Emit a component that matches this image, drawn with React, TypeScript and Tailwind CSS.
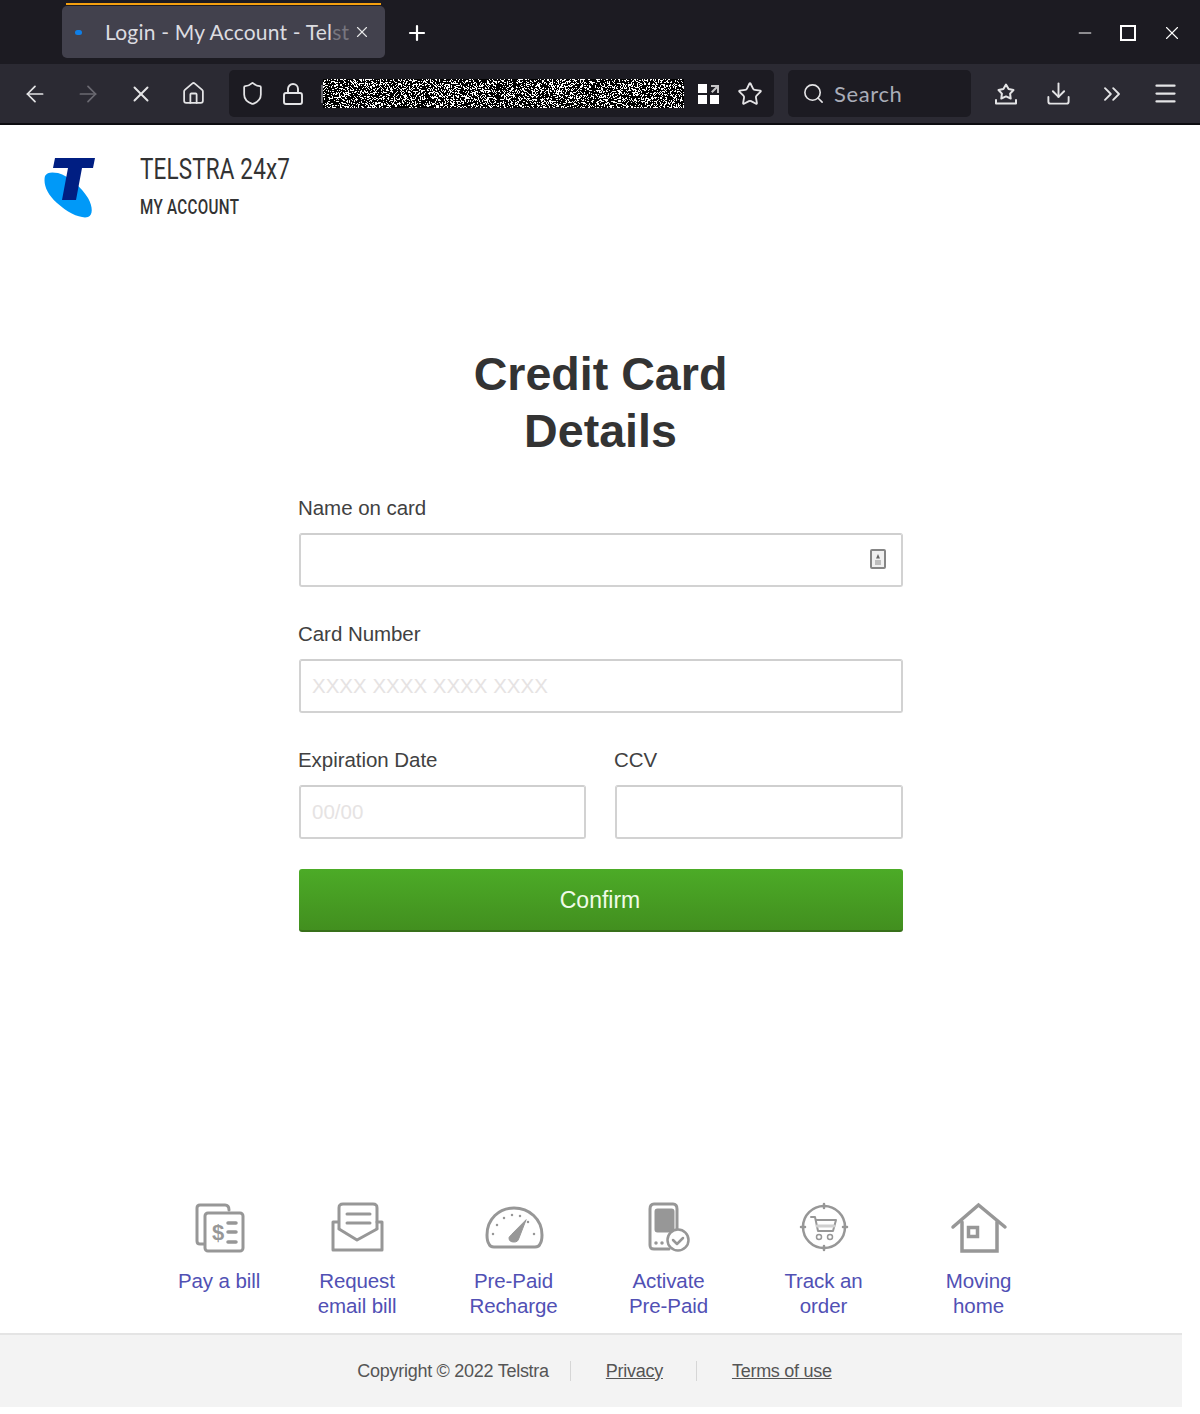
import { ArrowLeft, ArrowRight, ChevronsRight, Download, Home, Lock, Menu, Minus, Plus, Search, Shield, Star, X } from "lucide-react";
import { ReactNode, useMemo } from "react";

const sans = "font-['Liberation_Sans',Arial,sans-serif]";

// redacted url strip, static noise
function NoiseStrip() {
  const d = useMemo(() => {
    let seed = 48271;
    let out = "";
    for (let y = 0; y < 29; y++) {
      for (let x = 0; x < 361; x++) {
        seed = (seed * 16807) % 2147483647;
        if (seed % 100 < 33) out += `M${x} ${y}h1v1h-1z`;
      }
    }
    return out;
  }, []);
  return (
    <svg width="361" height="29" viewBox="0 0 361 29" className="shrink-0 bg-black">
      <path d={d} fill="#fff" />
    </svg>
  );
}

function ToolBtn({ children, className }: { children: ReactNode; className?: string }) {
  return <div className={`flex items-center justify-center shrink-0 ${className ?? ""}`}>{children}</div>;
}

function BrowserChrome() {
  return (
    <div className="shrink-0 font-['Open_Sans',sans-serif]">
      <div className="h-[64px] bg-[#1c1b22] flex items-start pl-[62px] pr-[17px]">
        <div className="relative mt-[6px] w-[323px] h-[52px] bg-[#42414d] rounded-[5px] flex items-center pl-[13px] pr-[14px]">
          <div className="absolute -top-[3px] left-[4px] right-[4px] h-[2px] bg-[#f5a00f]" />
          <span className="w-[7px] h-[5px] rounded-full bg-[#0f7fe8] shrink-0" />
          <span className="ml-[23px] w-[250px] overflow-hidden whitespace-nowrap text-[21px] tracking-[0.2px] text-[#dcdce0] font-['Lato',sans-serif]">
            Login - My Account - Tel<span className="text-[#77767f]">st</span>
          </span>
          <X size={18} strokeWidth={1.5} className="text-[#e8e8ea] -ml-[1px] shrink-0" />
        </div>
        <Plus size={24} strokeWidth={2.2} className="text-white ml-[20px] mt-[21px]" />
        <div className="ml-auto flex items-center gap-[23px] mt-[22px] text-white">
          <Minus size={20} strokeWidth={1.2} />
          <svg width="20" height="20" viewBox="0 0 20 20" fill="none" stroke="currentColor" strokeWidth="2">
            <rect x="3" y="3" width="14" height="14" />
          </svg>
          <X size={22} strokeWidth={1.2} />
        </div>
      </div>
      <div className="h-[59px] bg-[#2b2a33] flex items-center pl-[22px] text-[#e4e4e6]">
        <ToolBtn className="w-[26px]"><ArrowLeft size={26} strokeWidth={1.6} /></ToolBtn>
        <ToolBtn className="w-[26px] ml-[27px] text-[#6b6a72]"><ArrowRight size={26} strokeWidth={1.6} /></ToolBtn>
        <ToolBtn className="w-[26px] ml-[27px]"><X size={26} strokeWidth={1.8} /></ToolBtn>
        <ToolBtn className="w-[26px] ml-[26px]"><Home size={25} strokeWidth={1.7} /></ToolBtn>
        <div className="ml-[23px] w-[545px] h-[47px] rounded-[5px] bg-[#1c1b22] flex items-center pl-[11px]">
          <Shield size={25} strokeWidth={1.7} className="shrink-0" />
          <Lock size={24} strokeWidth={1.9} className="shrink-0 ml-[16px]" />
          <span className="w-[2px] h-[18px] bg-[#6b6a72] ml-[16px] shrink-0" />
          <NoiseStrip />
          <svg width="22" height="22" viewBox="0 0 22 22" className="ml-[14px] shrink-0" fill="#fff">
            <rect x="0" y="1" width="9" height="9" />
            <rect x="0" y="12" width="9" height="9" />
            <rect x="12" y="12" width="9" height="9" />
            <path d="M13 2h8v8h-2V5.500l-4.500 4.500-1.500-1.500L17.500 4H13z" opacity="0.75" />
          </svg>
          <Star size={26} strokeWidth={1.7} className="ml-[17px] shrink-0" />
        </div>
        <div className="ml-[14px] w-[183px] h-[47px] rounded-[5px] bg-[#1c1b22] flex items-center pl-[14px]">
          <Search size={23} strokeWidth={1.7} />
          <span className="ml-[9px] text-[22px] tracking-[0.6px] text-[#a9adb8] font-['Lato',sans-serif]">Search</span>
        </div>
        <div className="ml-[22px] flex items-center gap-[26px]">
          <svg width="26" height="26" viewBox="0 0 26 26" fill="none" stroke="currentColor" strokeWidth="2">
            <path d="M13 3.500l2.600 4.600 4.900.9-3.400 3.600.6 4.900-4.700-2.100-4.700 2.100.6-4.900L5.500 9l4.900-.9z" strokeLinejoin="round" />
            <path d="M3 19v3.500h20V19" strokeLinecap="round" strokeLinejoin="round" />
          </svg>
          <Download size={27} strokeWidth={1.7} />
          <ChevronsRight size={28} strokeWidth={1.6} />
          <Menu size={27} strokeWidth={2} />
        </div>
      </div>
      <div className="h-[2px] bg-[#0c0c10]" />
    </div>
  );
}

function TelstraLogo() {
  return (
    <svg width="52" height="62" viewBox="0 0 52 62" className="shrink-0">
      <path d="M1 19C-1 27 3 37 13 46 24 56 37 62 44 60 49 58 49 50 44 41 38 31 25 19 14 16 8 15 3 15 1 19Z" fill="#0099f8" />
      <path d="M11 1H51L49 11H38L32 43H18L24 11H9Z" fill="#001e82" />
    </svg>
  );
}

function Field({ label, placeholder, icon, className }: { label: string; placeholder?: string; icon?: ReactNode; className?: string }) {
  return (
    <label className={`block ${className ?? ""}`}>
      <span className="block h-[36px] -mt-[1px] mb-[1px] -ml-[1px] text-[20.5px] leading-[24px] tracking-[-0.05px] text-[#414141]">{label}</span>
      <span className="relative block">
        <input
          placeholder={placeholder}
          className="block w-full h-[54px] border-2 border-[#d2d2d2] border-t-[#cfcfcf] rounded-[3px] bg-white px-[11px] text-[20.5px] outline-none placeholder:text-[#e6e3e3]"
        />
        {icon}
      </span>
    </label>
  );
}

const iconProps = { width: 60, height: 56, viewBox: "0 0 60 56", fill: "none", stroke: "#979797", strokeWidth: 3, strokeLinejoin: "round" as const, strokeLinecap: "round" as const };

function BillIcon() {
  return (
    <svg {...iconProps}>
      <path d="M15 43h-4c-2 0-3-1-3-3V7c0-2 1-3 3-3h25c3 0 4 2 4 5" />
      <rect x="16" y="12" width="38" height="38" rx="3" />
      <text x="23" y="39" fontSize="22" fontWeight="700" fill="#979797" stroke="none" fontFamily="Liberation Sans, sans-serif">$</text>
      <path d="M39 22h8M39 31h8M39 41h8" strokeWidth="3.500" />
    </svg>
  );
}

function EmailIcon() {
  return (
    <svg {...iconProps}>
      <path d="M12 27V7c0-3 1-4 4-4h30c3 0 4 1 4 4v20" />
      <path d="M11 21H6v28h49V21h-5" />
      <path d="M12 28l18 11 20-11" />
      <path d="M20 13h23M20 22h23" />
    </svg>
  );
}

function GaugeIcon() {
  return (
    <svg {...iconProps}>
      <path d="M5 43c-2-3-2-6-2-9C3 18 15 7 30 7s28 11 28 27c0 3 0 6-2 9-1 3-3 3-5 3H10c-2 0-4 0-5-3Z" />
      <path d="M42 19 35 37c-1 3-2 4-5 4-3 0-5-1-5-4 0-1 1-2 2-3Z" fill="#979797" strokeWidth="1" />
      <path d="M9 33v.1M13 24v.1M20 17v.1M28 14v.1M36 15v.1M44 21v.1M50 33v.1" strokeWidth="2.500" />
    </svg>
  );
}

function ActivateIcon() {
  return (
    <svg {...iconProps}>
      <path d="M30 48H15c-3 0-4-1-4-4V8c0-3 1-5 4-5h19c3 0 4 2 4 5v20" />
      <rect x="17" y="9" width="17" height="21" rx="1.500" fill="#979797" />
      <path d="M17 42v.1M23 42v.1" strokeWidth="3.500" />
      <circle cx="39" cy="39" r="10.500" fill="#fff" strokeWidth="2.500" />
      <path d="M34 39l4 4 6-6" strokeWidth="2.500" />
    </svg>
  );
}

function TrackIcon() {
  return (
    <svg {...iconProps}>
      <circle cx="30" cy="26" r="21" strokeWidth="2.500" />
      <path d="M30 3v4M30 45v4M7 26h4M49 26h4" strokeWidth="2.500" />
      <path d="M17 16h4l3 14h15l3-11H22" strokeWidth="2" />
      <path d="M23 25h17" stroke="#d0d0d0" strokeWidth="3" />
      <circle cx="25" cy="36" r="2.500" strokeWidth="1.500" />
      <circle cx="36" cy="36" r="2.500" strokeWidth="1.500" />
    </svg>
  );
}

function HouseIcon() {
  return (
    <svg {...iconProps}>
      <path d="M4 26 29.500 4 56 26" strokeWidth="3.500" strokeLinejoin="miter" />
      <path d="M13 21v29h35V21" strokeWidth="3.500" strokeLinejoin="miter" />
      <rect x="19.500" y="26.500" width="9" height="9" strokeWidth="3.500" strokeLinejoin="miter" />
    </svg>
  );
}

const shortcuts = [
  { lines: ["Pay a bill"], icon: <BillIcon />, w: "w-[138px]" },
  { lines: ["Request", "email bill"], icon: <EmailIcon />, w: "w-[138px]" },
  { lines: ["Pre-Paid", "Recharge"], icon: <GaugeIcon />, w: "w-[155px] ml-[10px]" },
  { lines: ["Activate", "Pre-Paid"], icon: <ActivateIcon />, w: "w-[155px]" },
  { lines: ["Track an", "order"], icon: <TrackIcon />, w: "w-[155px]" },
  { lines: ["Moving", "home"], icon: <HouseIcon />, w: "w-[155px]" },
];

export default function App() {
  return (
    <div className={`w-[1200px] h-[1414px] bg-white flex flex-col overflow-hidden ${sans}`}>
      <BrowserChrome />

      <header className="flex items-start pl-[44px] pt-[32px] shrink-0">
        <TelstraLogo />
        <div className="ml-[44px] text-[#333]">
          <div className="origin-left scale-x-[0.775] whitespace-nowrap font-['Roboto',sans-serif] text-[29px] leading-[24px] tracking-[0.2px]">TELSTRA 24x7</div>
          <div className="origin-left scale-x-[0.76] whitespace-nowrap font-['Roboto',sans-serif] font-medium text-[20px] leading-[20px] mt-[16px] tracking-[0.4px]">MY ACCOUNT</div>
        </div>
      </header>

      <main className="w-[604px] ml-[299px] mt-[127px] shrink-0">
        <h1 className="-ml-[1px] text-center text-[46.6px] leading-[57px] font-bold text-[#333]">
          Credit Card
          <br />
          Details
        </h1>
        <div className="mt-[37px] flex flex-col gap-[36px]">
          <Field
            label="Name on card"
            icon={
              <svg width="16" height="20" viewBox="0 0 16 20" className="absolute right-[17px] top-[16px]">
                <rect x="1" y="1" width="14" height="18" rx="1" fill="#f0f0f0" stroke="#858585" strokeWidth="2" />
                <path d="M8 5l2 4.500H6z" fill="#666" />
                <path d="M5 11h6v5H5z" fill="#bdbdbd" />
              </svg>
            }
          />
          <Field label="Card Number" placeholder="XXXX XXXX XXXX XXXX" />
          <div className="flex gap-[29px]">
            <Field label="Expiration Date" placeholder="00/00" className="w-[287px]" />
            <Field label="CCV" className="w-[288px]" />
          </div>
        </div>
        <button className="mt-[30px] w-full h-[63px] pt-[1px] pr-[2px] rounded-[3px] border-b-2 border-[#38701a] bg-gradient-to-b from-[#4cab27] to-[#428f1f] text-[23px] text-[#f0fbe8]">
          Confirm
        </button>
      </main>

      <nav className="mt-auto flex pl-[150px] shrink-0">
        {shortcuts.map((s) => (
          <div key={s.lines[0]} className={`${s.w} flex flex-col items-center h-[132px]`}>
            <div className="h-[56px]">{s.icon}</div>
            <div className="mt-[11px] text-center text-[20.5px] leading-[25px] tracking-[-0.1px] text-[#5150b4]">
              {s.lines.map((l) => (
                <div key={l}>{l}</div>
              ))}
            </div>
          </div>
        ))}
      </nav>

      <div className="mb-[7px] w-[1182px] h-[74px] shrink-0 border-t-2 border-[#e4e4e4] bg-[#f3f3f3] flex items-center justify-center pl-[7px] text-[18px] tracking-[-0.27px] text-[#555]">
        <span className="pr-[21px] border-r border-[#d6d6d6] leading-[20px]">Copyright © 2022 Telstra</span>
        <a className="pl-[35px] pr-[33px] border-r border-[#d6d6d6] leading-[20px] underline">Privacy</a>
        <a className="pl-[35px] leading-[20px] underline">Terms of use</a>
      </div>
    </div>
  );
}
